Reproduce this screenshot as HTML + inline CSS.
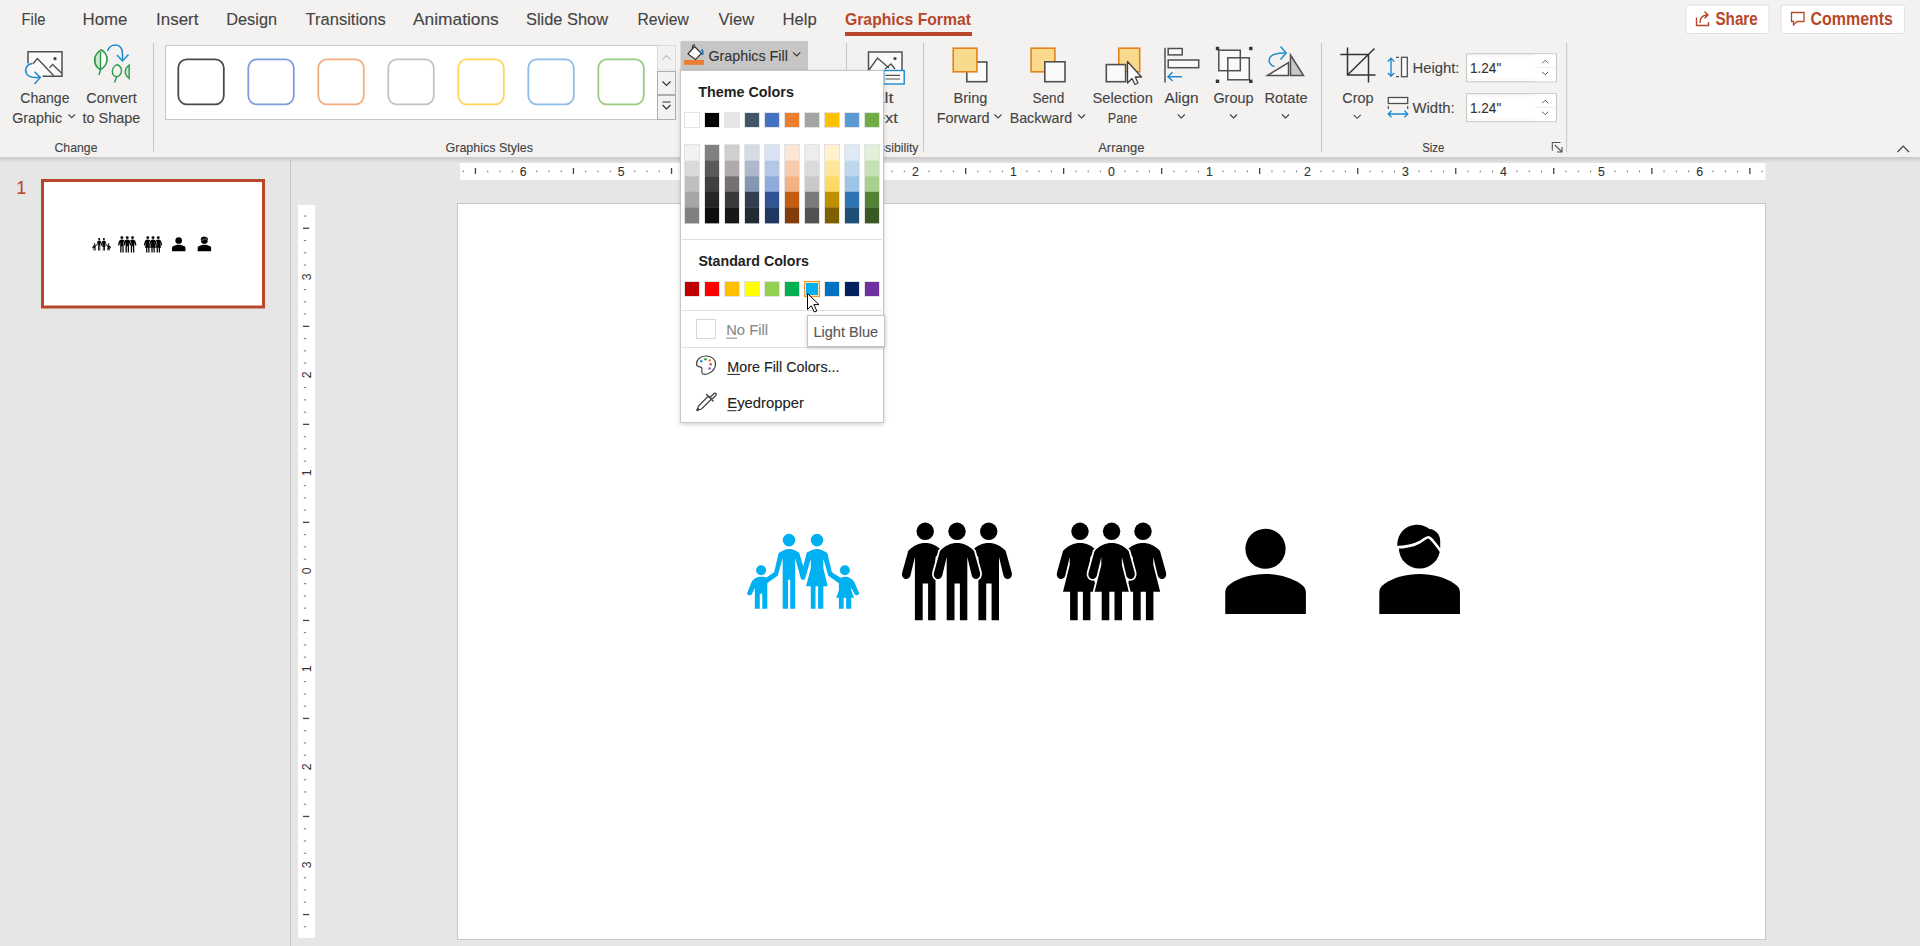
<!DOCTYPE html>
<html><head><meta charset="utf-8"><style>
html,body{margin:0;padding:0;width:1920px;height:946px;overflow:hidden;background:#e6e6e6}
svg{display:block;font-family:"Liberation Sans", sans-serif}
</style></head><body>
<svg width="1920" height="946" viewBox="0 0 1920 946">
<rect x="0" y="0" width="1920" height="157" fill="#f3f2f1"/><rect x="0" y="157" width="1920" height="789" fill="#e6e6e6"/><defs><linearGradient id="shd" x1="0" y1="0" x2="0" y2="1"><stop offset="0" stop-color="#c8c8c8"/><stop offset="1" stop-color="#e6e6e6"/></linearGradient></defs><rect x="0" y="157" width="1920" height="6" fill="url(#shd)"/><text x="21.6" y="25.2" font-size="17" fill="#444" font-weight="400" text-anchor="start" textLength="23.8" lengthAdjust="spacingAndGlyphs" stroke="#444" stroke-width="0.12" >File</text><text x="82.5" y="25.2" font-size="17" fill="#444" font-weight="400" text-anchor="start" textLength="44.9" lengthAdjust="spacingAndGlyphs" stroke="#444" stroke-width="0.12" >Home</text><text x="156.0" y="25.2" font-size="17" fill="#444" font-weight="400" text-anchor="start" textLength="42.5" lengthAdjust="spacingAndGlyphs" stroke="#444" stroke-width="0.12" >Insert</text><text x="226.3" y="25.2" font-size="17" fill="#444" font-weight="400" text-anchor="start" textLength="50.7" lengthAdjust="spacingAndGlyphs" stroke="#444" stroke-width="0.12" >Design</text><text x="305.5" y="25.2" font-size="17" fill="#444" font-weight="400" text-anchor="start" textLength="80.3" lengthAdjust="spacingAndGlyphs" stroke="#444" stroke-width="0.12" >Transitions</text><text x="413.0" y="25.2" font-size="17" fill="#444" font-weight="400" text-anchor="start" textLength="85.8" lengthAdjust="spacingAndGlyphs" stroke="#444" stroke-width="0.12" >Animations</text><text x="526.0" y="25.2" font-size="17" fill="#444" font-weight="400" text-anchor="start" textLength="82.0" lengthAdjust="spacingAndGlyphs" stroke="#444" stroke-width="0.12" >Slide Show</text><text x="637.4" y="25.2" font-size="17" fill="#444" font-weight="400" text-anchor="start" textLength="51.5" lengthAdjust="spacingAndGlyphs" stroke="#444" stroke-width="0.12" >Review</text><text x="718.6" y="25.2" font-size="17" fill="#444" font-weight="400" text-anchor="start" textLength="35.5" lengthAdjust="spacingAndGlyphs" stroke="#444" stroke-width="0.12" >View</text><text x="782.5" y="25.2" font-size="17" fill="#444" font-weight="400" text-anchor="start" textLength="34.3" lengthAdjust="spacingAndGlyphs" stroke="#444" stroke-width="0.12" >Help</text><text x="845.0" y="25.2" font-size="17" fill="#b7472a" font-weight="700" text-anchor="start" textLength="126.0" lengthAdjust="spacingAndGlyphs" >Graphics Format</text><rect x="845" y="32" width="127" height="4" fill="#b7472a"/><rect x="1686" y="5" width="83" height="28.5" rx="2.5" fill="#fff" stroke="#e1dfdd" stroke-width="1"/><rect x="1781" y="5" width="123.5" height="28.5" rx="2.5" fill="#fff" stroke="#e1dfdd" stroke-width="1"/><path d="M1696.5 17.5 V25.5 H1708.5 V22" fill="none" stroke="#b7472a" stroke-width="1.4"/><path d="M1700 23 C1700 17 1703 15 1707.5 15 M1704.5 11.5 L1708 15 L1704.5 18.5" fill="none" stroke="#b7472a" stroke-width="1.4"/><text x="1715.4" y="25.4" font-size="17.5" fill="#b7472a" font-weight="700" text-anchor="start" textLength="42.4" lengthAdjust="spacingAndGlyphs" >Share</text><path d="M1791.5 12.5 H1804 V21.5 H1797 L1793.5 25 V21.5 H1791.5 Z" fill="none" stroke="#b7472a" stroke-width="1.3"/><text x="1810.6" y="25.4" font-size="17.5" fill="#b7472a" font-weight="700" text-anchor="start" textLength="82.4" lengthAdjust="spacingAndGlyphs" >Comments</text><path d="M1897.5 152 L1903.2 146 L1909 152" fill="none" stroke="#444" stroke-width="1.2"/><line x1="153.5" y1="43" x2="153.5" y2="151.5" stroke="#c8c6c4" stroke-width="1"/><line x1="846.5" y1="43" x2="846.5" y2="151.5" stroke="#c8c6c4" stroke-width="1"/><line x1="923.5" y1="43" x2="923.5" y2="151.5" stroke="#c8c6c4" stroke-width="1"/><line x1="1321.5" y1="43" x2="1321.5" y2="152" stroke="#c8c6c4" stroke-width="1"/><line x1="1566.7" y1="43" x2="1566.7" y2="152" stroke="#c8c6c4" stroke-width="1"/><rect x="28" y="51.8" width="34" height="24.5" fill="#fafafa"/><path d="M28 63.5 V51.8 H62 V76.3 H42.5" fill="none" stroke="#505050" stroke-width="1.5"/><path d="M32.7 64 L37.4 58.6 L54 76 M49.5 67.9 L52.6 64.4 L62 73.6" fill="none" stroke="#505050" stroke-width="1.4"/><circle cx="55" cy="58.7" r="1.6" fill="#404040"/><path d="M32 63.5 C26 64.5 24.5 70 26.5 73.5 C28 76.5 31 77.4 35 77.4 L40 77.4" fill="none" stroke="#1e8bcd" stroke-width="1.5"/><path d="M34.5 71.7 L40.3 77.4 L34.5 84" fill="none" stroke="#1e8bcd" stroke-width="1.5"/><text x="20.3" y="102.5" font-size="15" fill="#444" font-weight="400" text-anchor="start" textLength="49.2" lengthAdjust="spacingAndGlyphs" stroke="#444" stroke-width="0.12" >Change</text><text x="12.2" y="122.5" font-size="15" fill="#444" font-weight="400" text-anchor="start" textLength="50.0" lengthAdjust="spacingAndGlyphs" stroke="#444" stroke-width="0.12" >Graphic</text><path d="M68.5 114.5 L71.7 117.7 L75 114.5" fill="none" stroke="#444" stroke-width="1.1"/><path d="M101 50 C96 53 94 58 94.8 62 C95.5 66 98 68.5 100.5 69.5 C104 67.5 107 64 107 59 C107 55 104 51 101 50 Z" fill="#c9e8cf" stroke="#2a9a46" stroke-width="1.4"/><path d="M101 50 C104 51 107 55 107 59 C107 64 104 67.5 100.5 69.5 Z" fill="#fafafa"/><path d="M101 50 C104 51 107 55 107 59 C107 64 104 67.5 100.5 69.5 C98 68.5 95.5 66 94.8 62 C94 58 96 53 101 50 M100.5 52 L100.5 70 L99 75" fill="none" stroke="#2a9a46" stroke-width="1.4"/><path d="M107.5 51 C109 46.5 112 45 115.5 45 C120 45 122.5 49 122.5 53.5 L122.5 60.5" fill="none" stroke="#1e8bcd" stroke-width="1.5"/><path d="M117 55 L122.5 61 L128.5 54.5" fill="none" stroke="#1e8bcd" stroke-width="1.5"/><path d="M117 64.5 C113.5 66.5 112.3 69.5 112.3 71.5 C112.5 74.5 114.5 76.5 116.5 77 C119.5 76 121.5 73.5 121.5 70.5 C121.5 68 119.5 65.5 117 64.5 Z M116.5 77 L114.5 82.5" fill="none" stroke="#2a9a46" stroke-width="1.4"/><path d="M129.2 65 C126.5 67 125.2 69.5 125.2 71.8 C125.2 74.2 126.5 76.5 129.2 78.5 Z" fill="#c9e8cf" stroke="#2a9a46" stroke-width="1.4"/><text x="86.3" y="102.5" font-size="15" fill="#444" font-weight="400" text-anchor="start" textLength="50.4" lengthAdjust="spacingAndGlyphs" stroke="#444" stroke-width="0.12" >Convert</text><text x="82.5" y="122.5" font-size="15" fill="#444" font-weight="400" text-anchor="start" textLength="57.9" lengthAdjust="spacingAndGlyphs" stroke="#444" stroke-width="0.12" >to Shape</text><text x="54.5" y="151.7" font-size="12.8" fill="#444" font-weight="400" text-anchor="start" textLength="43.0" lengthAdjust="spacingAndGlyphs" stroke="#444" stroke-width="0.12" >Change</text><rect x="165.5" y="45.5" width="510" height="74" fill="#fff" stroke="#c8c6c4" stroke-width="1"/><rect x="178.3" y="59.3" width="45.5" height="45" rx="8.5" fill="#fff" stroke="#4a4a4a" stroke-width="1.8"/><rect x="248.3" y="59.3" width="45.5" height="45" rx="8.5" fill="#fff" stroke="#7d9ddb" stroke-width="1.8"/><rect x="318.3" y="59.3" width="45.5" height="45" rx="8.5" fill="#fff" stroke="#f5ac7f" stroke-width="1.8"/><rect x="388.3" y="59.3" width="45.5" height="45" rx="8.5" fill="#fff" stroke="#c2c2c2" stroke-width="1.8"/><rect x="458.3" y="59.3" width="45.5" height="45" rx="8.5" fill="#fff" stroke="#ffd45a" stroke-width="1.8"/><rect x="528.3" y="59.3" width="45.5" height="45" rx="8.5" fill="#fff" stroke="#8dbce8" stroke-width="1.8"/><rect x="598.3" y="59.3" width="45.5" height="45" rx="8.5" fill="#fff" stroke="#98cc80" stroke-width="1.8"/><rect x="657.5" y="45.5" width="18" height="24.5" fill="#f3f2f1" stroke="#dcdad8" stroke-width="1"/><rect x="657.5" y="71.5" width="18" height="23" fill="#f3f2f1" stroke="#b0aeac" stroke-width="1"/><rect x="657.5" y="95.5" width="18" height="24" fill="#f3f2f1" stroke="#b0aeac" stroke-width="1"/><path d="M662.5 59.5 L666.5 55.5 L670.5 59.5" fill="none" stroke="#c0c0c0" stroke-width="1.1"/><path d="M662.5 81.5 L666.5 85.5 L670.5 81.5" fill="none" stroke="#333" stroke-width="1.2"/><path d="M662.5 102 H670.5 M662.5 105 L666.5 109 L670.5 105" fill="none" stroke="#333" stroke-width="1.2"/><text x="445.5" y="151.7" font-size="12.8" fill="#444" font-weight="400" text-anchor="start" textLength="87.5" lengthAdjust="spacingAndGlyphs" stroke="#444" stroke-width="0.12" >Graphics Styles</text><rect x="680.5" y="41" width="127.5" height="30" fill="#c8c6c4"/><rect x="684" y="60" width="20" height="4.8" fill="#ed7d31"/><path d="M688 54 L694.5 46.5 L701.5 53.5 L695.5 59.5 Z" fill="#fff" stroke="#333" stroke-width="1.2"/><path d="M692.5 48.5 C692 45.5 693.5 44.5 695 45" fill="none" stroke="#333" stroke-width="1.1"/><path d="M701.5 49.5 C703 50.5 703 53 702.5 55" fill="none" stroke="#1e6fc0" stroke-width="1.6"/><text x="708.4" y="61.0" font-size="14.5" fill="#333" font-weight="400" text-anchor="start" textLength="79.5" lengthAdjust="spacingAndGlyphs" stroke="#333" stroke-width="0.12" >Graphics Fill</text><path d="M793 52.3 L796.7 56 L800.3 52.3" fill="none" stroke="#333" stroke-width="1.1"/><rect x="868.5" y="52" width="33.5" height="24" fill="#fafafa" stroke="#505050" stroke-width="1.5"/><path d="M869 70 L877.5 58 L889 68 M885 69 L891 64 L895 69" fill="none" stroke="#505050" stroke-width="1.4"/><circle cx="895" cy="58.5" r="1.6" fill="#404040"/><rect x="883.7" y="70.5" width="20.5" height="13.5" fill="#fafafa" stroke="#1e8bcd" stroke-width="1.4"/><path d="M885.5 75.3 H900 M885.5 79 H900" stroke="#505050" stroke-width="1.2"/><text x="872.5" y="102.5" font-size="15" fill="#444" font-weight="400" text-anchor="start" textLength="21.0" lengthAdjust="spacingAndGlyphs" stroke="#444" stroke-width="0.12" >Alt</text><text x="867.5" y="122.5" font-size="15" fill="#444" font-weight="400" text-anchor="start" textLength="30.5" lengthAdjust="spacingAndGlyphs" stroke="#444" stroke-width="0.12" >Text</text><text x="851.5" y="151.7" font-size="12.8" fill="#444" font-weight="400" text-anchor="start" textLength="67.0" lengthAdjust="spacingAndGlyphs" stroke="#444" stroke-width="0.12" >Accessibility</text><rect x="966.8" y="62.0" width="20.0" height="19.7" fill="#fafafa" stroke="#505050" stroke-width="1.6"/><rect x="953.2" y="48.2" width="23.7" height="23.6" fill="#f9d98c" stroke="#e3821e" stroke-width="1.6"/><text x="953.5" y="102.5" font-size="15" fill="#444" font-weight="400" text-anchor="start" textLength="33.9" lengthAdjust="spacingAndGlyphs" stroke="#444" stroke-width="0.12" >Bring</text><text x="936.7" y="122.5" font-size="15" fill="#444" font-weight="400" text-anchor="start" textLength="52.9" lengthAdjust="spacingAndGlyphs" stroke="#444" stroke-width="0.12" >Forward</text><path d="M994.5 114.5 L998 118 L1001.5 114.5" fill="none" stroke="#444" stroke-width="1.1"/><rect x="1031.1" y="48.2" width="23.8" height="23.6" fill="#f9d98c" stroke="#e3821e" stroke-width="1.6"/><rect x="1044.8" y="61.8" width="20.2" height="19.9" fill="#fafafa" stroke="#505050" stroke-width="1.6"/><text x="1032.5" y="102.5" font-size="15" fill="#444" font-weight="400" text-anchor="start" textLength="31.7" lengthAdjust="spacingAndGlyphs" stroke="#444" stroke-width="0.12" >Send</text><text x="1009.7" y="122.5" font-size="15" fill="#444" font-weight="400" text-anchor="start" textLength="62.5" lengthAdjust="spacingAndGlyphs" stroke="#444" stroke-width="0.12" >Backward</text><path d="M1078 114.5 L1081.5 118 L1085 114.5" fill="none" stroke="#444" stroke-width="1.1"/><rect x="1118.8" y="48.2" width="20.9" height="23.6" fill="#f9d98c" stroke="#e3821e" stroke-width="1.6"/><rect x="1106.3" y="64.6" width="19.3" height="17.1" fill="#fafafa" stroke="#505050" stroke-width="1.6"/><path d="M1127.5 61.5 L1127.5 83 L1132 78.5 L1135 84.5 L1138 83 L1135.3 77 L1141.5 77 Z" fill="#fafafa" stroke="#404040" stroke-width="1.3" stroke-linejoin="round"/><text x="1092.6" y="102.5" font-size="15" fill="#444" font-weight="400" text-anchor="start" textLength="60.2" lengthAdjust="spacingAndGlyphs" stroke="#444" stroke-width="0.12" >Selection</text><text x="1107.7" y="122.5" font-size="15" fill="#444" font-weight="400" text-anchor="start" textLength="29.6" lengthAdjust="spacingAndGlyphs" stroke="#444" stroke-width="0.12" >Pane</text><line x1="1165" y1="47.7" x2="1165" y2="82.5" stroke="#505050" stroke-width="1.5"/><rect x="1168.2" y="48.5" width="14.0" height="6.4" fill="#fafafa" stroke="#505050" stroke-width="1.5"/><rect x="1168.2" y="60.0" width="30.5" height="7.7" fill="#fafafa" stroke="#505050" stroke-width="1.5"/><path d="M1168 76.7 H1182 M1172.5 72.3 L1168 76.7 L1172.5 81" fill="none" stroke="#1e8bcd" stroke-width="1.5"/><text x="1164.4" y="102.5" font-size="15" fill="#444" font-weight="400" text-anchor="start" textLength="34.3" lengthAdjust="spacingAndGlyphs" stroke="#444" stroke-width="0.12" >Align</text><path d="M1177.8 114.5 L1181.3 118 L1184.8 114.5" fill="none" stroke="#444" stroke-width="1.1"/><rect x="1218" y="49.5" width="32" height="30.5" fill="#fafafa"/><rect x="1218.8" y="50.2" width="21.5" height="20.5" fill="none" stroke="#505050" stroke-width="1.5"/><rect x="1227.8" y="57.8" width="21.5" height="22.0" fill="none" stroke="#505050" stroke-width="1.5"/><rect x="1215.8" y="46.8" width="3.4" height="3.4" fill="#333"/><rect x="1249.1" y="46.8" width="3.4" height="3.4" fill="#333"/><rect x="1215.8" y="79.6" width="3.4" height="3.4" fill="#333"/><rect x="1249.1" y="79.6" width="3.4" height="3.4" fill="#333"/><text x="1213.4" y="102.5" font-size="15" fill="#444" font-weight="400" text-anchor="start" textLength="40.1" lengthAdjust="spacingAndGlyphs" stroke="#444" stroke-width="0.12" >Group</text><path d="M1230 114.5 L1233.5 118 L1237 114.5" fill="none" stroke="#444" stroke-width="1.1"/><path d="M1267.5 75.5 L1288.5 62.5 V75.5 Z" fill="#fafafa" stroke="#505050" stroke-width="1.5" stroke-linejoin="miter"/><path d="M1290.5 55 L1303.5 75.5 H1290.5 Z" fill="#c8c8c8" stroke="#505050" stroke-width="1.5"/><path d="M1274.5 66.5 C1269.5 65 1268 61 1270 57.5 C1272 54 1276 53 1285 53" fill="none" stroke="#1e8bcd" stroke-width="1.5"/><path d="M1280.5 46.5 L1286.2 53 L1280.5 59.5" fill="none" stroke="#1e8bcd" stroke-width="1.5"/><text x="1264.5" y="102.5" font-size="15" fill="#444" font-weight="400" text-anchor="start" textLength="43.1" lengthAdjust="spacingAndGlyphs" stroke="#444" stroke-width="0.12" >Rotate</text><path d="M1282 114.5 L1285.5 118 L1289 114.5" fill="none" stroke="#444" stroke-width="1.1"/><text x="1098.2" y="151.7" font-size="12.8" fill="#444" font-weight="400" text-anchor="start" textLength="46.2" lengthAdjust="spacingAndGlyphs" stroke="#444" stroke-width="0.12" >Arrange</text><path d="M1347.5 47.5 V75 H1375.5 M1340.3 54.5 H1368.5 V82.4 M1347.5 75 L1374.5 48.5" fill="none" stroke="#333" stroke-width="1.5"/><text x="1342.3" y="102.5" font-size="15" fill="#444" font-weight="400" text-anchor="start" textLength="31.2" lengthAdjust="spacingAndGlyphs" stroke="#444" stroke-width="0.12" >Crop</text><path d="M1353.7 114.8 L1357.2 118.3 L1360.7 114.8" fill="none" stroke="#444" stroke-width="1.1"/><path d="M1391 58.5 V76 M1387.8 61.5 L1391 58.3 L1394.2 61.5 M1387.8 73 L1391 76.2 L1394.2 73" fill="none" stroke="#1e8bcd" stroke-width="1.4"/><rect x="1401.5" y="57.3" width="5.8" height="19.4" fill="#fafafa" stroke="#505050" stroke-width="1.3"/><path d="M1396 57.3 H1399 M1396 76.7 H1399" stroke="#505050" stroke-width="1.2"/><text x="1412.5" y="73.0" font-size="15" fill="#444" font-weight="400" text-anchor="start" textLength="47.0" lengthAdjust="spacingAndGlyphs" stroke="#444" stroke-width="0.12" >Height:</text><rect x="1388.3" y="97.5" width="19.4" height="6" fill="#fafafa" stroke="#505050" stroke-width="1.3"/><path d="M1388.3 106 V109 M1407.7 106 V109" stroke="#505050" stroke-width="1.2"/><path d="M1388.5 114 H1407.5 M1391.5 110.8 L1388.3 114 L1391.5 117.2 M1404.5 110.8 L1407.7 114 L1404.5 117.2" fill="none" stroke="#1e8bcd" stroke-width="1.4"/><text x="1412.5" y="112.5" font-size="15" fill="#444" font-weight="400" text-anchor="start" textLength="42.2" lengthAdjust="spacingAndGlyphs" stroke="#444" stroke-width="0.12" >Width:</text><rect x="1466.5" y="53.8" width="90" height="28" fill="#fafafa" stroke="#c8c6c4" stroke-width="1"/><rect x="1467.6" y="57.0" width="66.5" height="20.3" fill="#fff"/><rect x="1534.5" y="54.3" width="21.5" height="27" fill="#fff"/><line x1="1535" y1="67.5" x2="1556" y2="67.5" stroke="#f0efee" stroke-width="1"/><path d="M1542.2 63.3 L1545.2 60.3 L1548.2 63.3" fill="none" stroke="#555" stroke-width="1"/><path d="M1542.2 71.8 L1545.2 74.8 L1548.2 71.8" fill="none" stroke="#555" stroke-width="1"/><text x="1470.0" y="73.0" font-size="14.5" fill="#333" font-weight="400" text-anchor="start" textLength="31.2" lengthAdjust="spacingAndGlyphs" stroke="#333" stroke-width="0.12" >1.24&quot;</text><rect x="1466.5" y="93.7" width="90" height="28" fill="#fafafa" stroke="#c8c6c4" stroke-width="1"/><rect x="1467.6" y="96.9" width="66.5" height="20.3" fill="#fff"/><rect x="1534.5" y="94.2" width="21.5" height="27" fill="#fff"/><line x1="1535" y1="107.4" x2="1556" y2="107.4" stroke="#f0efee" stroke-width="1"/><path d="M1542.2 103.2 L1545.2 100.2 L1548.2 103.2" fill="none" stroke="#555" stroke-width="1"/><path d="M1542.2 111.7 L1545.2 114.7 L1548.2 111.7" fill="none" stroke="#555" stroke-width="1"/><text x="1470.0" y="112.5" font-size="14.5" fill="#333" font-weight="400" text-anchor="start" textLength="31.2" lengthAdjust="spacingAndGlyphs" stroke="#333" stroke-width="0.12" >1.24&quot;</text><text x="1422.2" y="151.5" font-size="12.8" fill="#444" font-weight="400" text-anchor="start" textLength="22.1" lengthAdjust="spacingAndGlyphs" stroke="#444" stroke-width="0.12" >Size</text><path d="M1552.3 150.8 V142.5 H1560.5 M1554.8 145 L1562 152 M1562 147 V152 H1557" fill="none" stroke="#555" stroke-width="1.1"/><line x1="290.5" y1="160" x2="290.5" y2="946" stroke="#c8c6c4" stroke-width="1"/><text x="16.5" y="194.0" font-size="17.5" fill="#b7472a" font-weight="400" text-anchor="start" stroke="#b7472a" stroke-width="0.12" >1</text><rect x="42.5" y="180.5" width="221" height="126.5" fill="#fff" stroke="#b7472a" stroke-width="3"/><rect x="460" y="163" width="1305.5" height="17" fill="#fff"/><rect x="298" y="205" width="17" height="733" fill="#fff"/><rect x="462.7" y="170.5" width="1.1" height="1.8" fill="#808080"/><rect x="474.8" y="168" width="1.3" height="6" fill="#444"/><rect x="487.2" y="170.5" width="1.1" height="1.8" fill="#808080"/><rect x="499.4" y="170.5" width="1.1" height="1.8" fill="#808080"/><rect x="511.7" y="170.5" width="1.1" height="1.8" fill="#808080"/><text x="523.2" y="175.8" font-size="12.3" fill="#333" font-weight="400" text-anchor="middle" stroke="#333" stroke-width="0.12" >6</text><rect x="536.2" y="170.5" width="1.1" height="1.8" fill="#808080"/><rect x="548.4" y="170.5" width="1.1" height="1.8" fill="#808080"/><rect x="560.7" y="170.5" width="1.1" height="1.8" fill="#808080"/><rect x="572.8" y="168" width="1.3" height="6" fill="#444"/><rect x="585.2" y="170.5" width="1.1" height="1.8" fill="#808080"/><rect x="597.4" y="170.5" width="1.1" height="1.8" fill="#808080"/><rect x="609.7" y="170.5" width="1.1" height="1.8" fill="#808080"/><text x="621.2" y="175.8" font-size="12.3" fill="#333" font-weight="400" text-anchor="middle" stroke="#333" stroke-width="0.12" >5</text><rect x="634.2" y="170.5" width="1.1" height="1.8" fill="#808080"/><rect x="646.5" y="170.5" width="1.1" height="1.8" fill="#808080"/><rect x="658.7" y="170.5" width="1.1" height="1.8" fill="#808080"/><rect x="670.9" y="168" width="1.3" height="6" fill="#444"/><rect x="683.2" y="170.5" width="1.1" height="1.8" fill="#808080"/><rect x="695.5" y="170.5" width="1.1" height="1.8" fill="#808080"/><rect x="707.7" y="170.5" width="1.1" height="1.8" fill="#808080"/><text x="719.3" y="175.8" font-size="12.3" fill="#333" font-weight="400" text-anchor="middle" stroke="#333" stroke-width="0.12" >4</text><rect x="732.2" y="170.5" width="1.1" height="1.8" fill="#808080"/><rect x="744.5" y="170.5" width="1.1" height="1.8" fill="#808080"/><rect x="756.7" y="170.5" width="1.1" height="1.8" fill="#808080"/><rect x="768.9" y="168" width="1.3" height="6" fill="#444"/><rect x="781.2" y="170.5" width="1.1" height="1.8" fill="#808080"/><rect x="793.5" y="170.5" width="1.1" height="1.8" fill="#808080"/><rect x="805.8" y="170.5" width="1.1" height="1.8" fill="#808080"/><text x="817.3" y="175.8" font-size="12.3" fill="#333" font-weight="400" text-anchor="middle" stroke="#333" stroke-width="0.12" >3</text><rect x="830.3" y="170.5" width="1.1" height="1.8" fill="#808080"/><rect x="842.5" y="170.5" width="1.1" height="1.8" fill="#808080"/><rect x="854.8" y="170.5" width="1.1" height="1.8" fill="#808080"/><rect x="866.9" y="168" width="1.3" height="6" fill="#444"/><rect x="879.3" y="170.5" width="1.1" height="1.8" fill="#808080"/><rect x="891.5" y="170.5" width="1.1" height="1.8" fill="#808080"/><rect x="903.8" y="170.5" width="1.1" height="1.8" fill="#808080"/><text x="915.3" y="175.8" font-size="12.3" fill="#333" font-weight="400" text-anchor="middle" stroke="#333" stroke-width="0.12" >2</text><rect x="928.3" y="170.5" width="1.1" height="1.8" fill="#808080"/><rect x="940.5" y="170.5" width="1.1" height="1.8" fill="#808080"/><rect x="952.8" y="170.5" width="1.1" height="1.8" fill="#808080"/><rect x="965.0" y="168" width="1.3" height="6" fill="#444"/><rect x="977.3" y="170.5" width="1.1" height="1.8" fill="#808080"/><rect x="989.6" y="170.5" width="1.1" height="1.8" fill="#808080"/><rect x="1001.8" y="170.5" width="1.1" height="1.8" fill="#808080"/><text x="1013.4" y="175.8" font-size="12.3" fill="#333" font-weight="400" text-anchor="middle" stroke="#333" stroke-width="0.12" >1</text><rect x="1026.3" y="170.5" width="1.1" height="1.8" fill="#808080"/><rect x="1038.6" y="170.5" width="1.1" height="1.8" fill="#808080"/><rect x="1050.8" y="170.5" width="1.1" height="1.8" fill="#808080"/><rect x="1063.0" y="168" width="1.3" height="6" fill="#444"/><rect x="1075.3" y="170.5" width="1.1" height="1.8" fill="#808080"/><rect x="1087.6" y="170.5" width="1.1" height="1.8" fill="#808080"/><rect x="1099.8" y="170.5" width="1.1" height="1.8" fill="#808080"/><text x="1111.4" y="175.8" font-size="12.3" fill="#333" font-weight="400" text-anchor="middle" stroke="#333" stroke-width="0.12" >0</text><rect x="1124.4" y="170.5" width="1.1" height="1.8" fill="#808080"/><rect x="1136.6" y="170.5" width="1.1" height="1.8" fill="#808080"/><rect x="1148.9" y="170.5" width="1.1" height="1.8" fill="#808080"/><rect x="1161.0" y="168" width="1.3" height="6" fill="#444"/><rect x="1173.4" y="170.5" width="1.1" height="1.8" fill="#808080"/><rect x="1185.6" y="170.5" width="1.1" height="1.8" fill="#808080"/><rect x="1197.9" y="170.5" width="1.1" height="1.8" fill="#808080"/><text x="1209.4" y="175.8" font-size="12.3" fill="#333" font-weight="400" text-anchor="middle" stroke="#333" stroke-width="0.12" >1</text><rect x="1222.4" y="170.5" width="1.1" height="1.8" fill="#808080"/><rect x="1234.6" y="170.5" width="1.1" height="1.8" fill="#808080"/><rect x="1246.9" y="170.5" width="1.1" height="1.8" fill="#808080"/><rect x="1259.0" y="168" width="1.3" height="6" fill="#444"/><rect x="1271.4" y="170.5" width="1.1" height="1.8" fill="#808080"/><rect x="1283.7" y="170.5" width="1.1" height="1.8" fill="#808080"/><rect x="1295.9" y="170.5" width="1.1" height="1.8" fill="#808080"/><text x="1307.5" y="175.8" font-size="12.3" fill="#333" font-weight="400" text-anchor="middle" stroke="#333" stroke-width="0.12" >2</text><rect x="1320.4" y="170.5" width="1.1" height="1.8" fill="#808080"/><rect x="1332.7" y="170.5" width="1.1" height="1.8" fill="#808080"/><rect x="1344.9" y="170.5" width="1.1" height="1.8" fill="#808080"/><rect x="1357.1" y="168" width="1.3" height="6" fill="#444"/><rect x="1369.4" y="170.5" width="1.1" height="1.8" fill="#808080"/><rect x="1381.7" y="170.5" width="1.1" height="1.8" fill="#808080"/><rect x="1393.9" y="170.5" width="1.1" height="1.8" fill="#808080"/><text x="1405.5" y="175.8" font-size="12.3" fill="#333" font-weight="400" text-anchor="middle" stroke="#333" stroke-width="0.12" >3</text><rect x="1418.4" y="170.5" width="1.1" height="1.8" fill="#808080"/><rect x="1430.7" y="170.5" width="1.1" height="1.8" fill="#808080"/><rect x="1443.0" y="170.5" width="1.1" height="1.8" fill="#808080"/><rect x="1455.1" y="168" width="1.3" height="6" fill="#444"/><rect x="1467.5" y="170.5" width="1.1" height="1.8" fill="#808080"/><rect x="1479.7" y="170.5" width="1.1" height="1.8" fill="#808080"/><rect x="1492.0" y="170.5" width="1.1" height="1.8" fill="#808080"/><text x="1503.5" y="175.8" font-size="12.3" fill="#333" font-weight="400" text-anchor="middle" stroke="#333" stroke-width="0.12" >4</text><rect x="1516.5" y="170.5" width="1.1" height="1.8" fill="#808080"/><rect x="1528.7" y="170.5" width="1.1" height="1.8" fill="#808080"/><rect x="1541.0" y="170.5" width="1.1" height="1.8" fill="#808080"/><rect x="1553.1" y="168" width="1.3" height="6" fill="#444"/><rect x="1565.5" y="170.5" width="1.1" height="1.8" fill="#808080"/><rect x="1577.7" y="170.5" width="1.1" height="1.8" fill="#808080"/><rect x="1590.0" y="170.5" width="1.1" height="1.8" fill="#808080"/><text x="1601.5" y="175.8" font-size="12.3" fill="#333" font-weight="400" text-anchor="middle" stroke="#333" stroke-width="0.12" >5</text><rect x="1614.5" y="170.5" width="1.1" height="1.8" fill="#808080"/><rect x="1626.8" y="170.5" width="1.1" height="1.8" fill="#808080"/><rect x="1639.0" y="170.5" width="1.1" height="1.8" fill="#808080"/><rect x="1651.2" y="168" width="1.3" height="6" fill="#444"/><rect x="1663.5" y="170.5" width="1.1" height="1.8" fill="#808080"/><rect x="1675.8" y="170.5" width="1.1" height="1.8" fill="#808080"/><rect x="1688.0" y="170.5" width="1.1" height="1.8" fill="#808080"/><text x="1699.6" y="175.8" font-size="12.3" fill="#333" font-weight="400" text-anchor="middle" stroke="#333" stroke-width="0.12" >6</text><rect x="1712.5" y="170.5" width="1.1" height="1.8" fill="#808080"/><rect x="1724.8" y="170.5" width="1.1" height="1.8" fill="#808080"/><rect x="1737.0" y="170.5" width="1.1" height="1.8" fill="#808080"/><rect x="1749.2" y="168" width="1.3" height="6" fill="#444"/><rect x="1761.5" y="170.5" width="1.1" height="1.8" fill="#808080"/><rect x="303.8" y="215.5" width="2.4" height="1.1" fill="#808080"/><rect x="303" y="227.6" width="6.2" height="1.3" fill="#444"/><rect x="303.8" y="240.0" width="2.4" height="1.1" fill="#808080"/><rect x="303.8" y="252.3" width="2.4" height="1.1" fill="#808080"/><rect x="303.8" y="264.5" width="2.4" height="1.1" fill="#808080"/><text transform="translate(310.8 276.8) rotate(-90)" x="0" y="0" font-size="12.3" fill="#333" text-anchor="middle">3</text><rect x="303.8" y="289.0" width="2.4" height="1.1" fill="#808080"/><rect x="303.8" y="301.3" width="2.4" height="1.1" fill="#808080"/><rect x="303.8" y="313.5" width="2.4" height="1.1" fill="#808080"/><rect x="303" y="325.7" width="6.2" height="1.3" fill="#444"/><rect x="303.8" y="338.0" width="2.4" height="1.1" fill="#808080"/><rect x="303.8" y="350.3" width="2.4" height="1.1" fill="#808080"/><rect x="303.8" y="362.5" width="2.4" height="1.1" fill="#808080"/><text transform="translate(310.8 374.8) rotate(-90)" x="0" y="0" font-size="12.3" fill="#333" text-anchor="middle">2</text><rect x="303.8" y="387.0" width="2.4" height="1.1" fill="#808080"/><rect x="303.8" y="399.3" width="2.4" height="1.1" fill="#808080"/><rect x="303.8" y="411.6" width="2.4" height="1.1" fill="#808080"/><rect x="303" y="423.7" width="6.2" height="1.3" fill="#444"/><rect x="303.8" y="436.1" width="2.4" height="1.1" fill="#808080"/><rect x="303.8" y="448.3" width="2.4" height="1.1" fill="#808080"/><rect x="303.8" y="460.6" width="2.4" height="1.1" fill="#808080"/><text transform="translate(310.8 472.8) rotate(-90)" x="0" y="0" font-size="12.3" fill="#333" text-anchor="middle">1</text><rect x="303.8" y="485.1" width="2.4" height="1.1" fill="#808080"/><rect x="303.8" y="497.3" width="2.4" height="1.1" fill="#808080"/><rect x="303.8" y="509.6" width="2.4" height="1.1" fill="#808080"/><rect x="303" y="521.7" width="6.2" height="1.3" fill="#444"/><rect x="303.8" y="534.1" width="2.4" height="1.1" fill="#808080"/><rect x="303.8" y="546.3" width="2.4" height="1.1" fill="#808080"/><rect x="303.8" y="558.6" width="2.4" height="1.1" fill="#808080"/><text transform="translate(310.8 570.9) rotate(-90)" x="0" y="0" font-size="12.3" fill="#333" text-anchor="middle">0</text><rect x="303.8" y="583.1" width="2.4" height="1.1" fill="#808080"/><rect x="303.8" y="595.4" width="2.4" height="1.1" fill="#808080"/><rect x="303.8" y="607.6" width="2.4" height="1.1" fill="#808080"/><rect x="303" y="619.8" width="6.2" height="1.3" fill="#444"/><rect x="303.8" y="632.1" width="2.4" height="1.1" fill="#808080"/><rect x="303.8" y="644.4" width="2.4" height="1.1" fill="#808080"/><rect x="303.8" y="656.6" width="2.4" height="1.1" fill="#808080"/><text transform="translate(310.8 668.9) rotate(-90)" x="0" y="0" font-size="12.3" fill="#333" text-anchor="middle">1</text><rect x="303.8" y="681.1" width="2.4" height="1.1" fill="#808080"/><rect x="303.8" y="693.4" width="2.4" height="1.1" fill="#808080"/><rect x="303.8" y="705.6" width="2.4" height="1.1" fill="#808080"/><rect x="303" y="717.8" width="6.2" height="1.3" fill="#444"/><rect x="303.8" y="730.1" width="2.4" height="1.1" fill="#808080"/><rect x="303.8" y="742.4" width="2.4" height="1.1" fill="#808080"/><rect x="303.8" y="754.7" width="2.4" height="1.1" fill="#808080"/><text transform="translate(310.8 766.9) rotate(-90)" x="0" y="0" font-size="12.3" fill="#333" text-anchor="middle">2</text><rect x="303.8" y="779.2" width="2.4" height="1.1" fill="#808080"/><rect x="303.8" y="791.4" width="2.4" height="1.1" fill="#808080"/><rect x="303.8" y="803.7" width="2.4" height="1.1" fill="#808080"/><rect x="303" y="815.8" width="6.2" height="1.3" fill="#444"/><rect x="303.8" y="828.2" width="2.4" height="1.1" fill="#808080"/><rect x="303.8" y="840.4" width="2.4" height="1.1" fill="#808080"/><rect x="303.8" y="852.7" width="2.4" height="1.1" fill="#808080"/><text transform="translate(310.8 864.9) rotate(-90)" x="0" y="0" font-size="12.3" fill="#333" text-anchor="middle">3</text><rect x="303.8" y="877.2" width="2.4" height="1.1" fill="#808080"/><rect x="303.8" y="889.4" width="2.4" height="1.1" fill="#808080"/><rect x="303.8" y="901.7" width="2.4" height="1.1" fill="#808080"/><rect x="303" y="913.9" width="6.2" height="1.3" fill="#444"/><rect x="303.8" y="926.2" width="2.4" height="1.1" fill="#808080"/><rect x="457.5" y="203.5" width="1308" height="736" fill="#fff" stroke="#c6c6c6" stroke-width="1"/><g fill="#00b0f0"><g><circle cx="761.1" cy="570.2" r="5"/><circle cx="789" cy="540.1" r="6.3"/><circle cx="817" cy="540.1" r="6.3"/><circle cx="844.9" cy="570.2" r="5"/><path transform="translate(740 525) scale(0.1004)" d="M115,570 C130,535 170,515 210,515 C235,515 250,518 262,522 L340,470 L385,280 C420,255 455,238 488,238 C520,238 560,252 590,280 L630,410 L665,275 C700,252 735,238 767,238 C800,238 840,255 870,280 L915,470 L1000,525 C1015,518 1030,515 1045,515 C1090,515 1125,540 1140,570 L1185,675 C1190,690 1175,703 1160,700 C1150,698 1143,692 1140,685 L1108,625 L1108,650 L1135,725 L1108,725 L1108,835 L1057,835 L1057,725 L1032,725 L1032,835 L985,835 L985,725 L958,725 L985,650 L985,580 L880,505 L830,335 L830,430 L873,610 L830,610 L830,835 L778,835 L778,610 L752,610 L752,835 L705,835 L705,610 L658,610 L705,430 L705,335 L650,530 C645,550 610,550 605,530 L550,330 L550,835 L500,835 L500,545 L478,545 L478,835 L425,835 L425,330 L375,505 L272,578 L272,835 L222,835 L222,685 L197,685 L197,835 L148,835 L148,625 L118,690 C110,705 85,705 75,692 C70,686 70,680 72,675 Z"/></g></g><g fill="#000"><circle cx="925.2" cy="531.3" r="8.7"/><path d="M908.2,551 C913.2,545.5 919.2,543 925.2,543 C931.2,543 937.2,545.5 942.2,551 L935.5,557 L935.5,620.2 L928.1,620.2 L928.1,583.6 L922.7,583.6 L922.7,620.2 L914.9000000000001,620.2 L914.9000000000001,557 L910.4000000000001,575.8 C909.9000000000001,577.8 908.2,579 906.2,579 C903.7,579 901.2,576.5 902.2,572.5 Z"/><circle cx="988.7" cy="531.3" r="8.7"/><path d="M971.7,551 C976.7,545.5 982.7,543 988.7,543 C994.7,543 1000.7,545.5 1005.7,551 L1011.7,572.5 C1012.7,576.5 1010.2,579 1007.7,579 C1005.7,579 1004.0,577.8 1003.5,575.8 L999.0,557 L999.0,620.2 L991.6,620.2 L991.6,583.6 L986.2,583.6 L986.2,620.2 L978.4000000000001,620.2 L978.4000000000001,557 Z"/><circle cx="957" cy="531.3" r="8.7"/><path d="M940,551 C945,545.5 951,543 957,543 C963,543 969,545.5 974,551 L980,572.5 C981,576.5 978.5,579 976,579 C974,579 972.3,577.8 971.8,575.8 L967.3,557 L967.3,620.2 L959.9,620.2 L959.9,583.6 L954.5,583.6 L954.5,620.2 L946.7,620.2 L946.7,557 L942.2,575.8 C941.7,577.8 940,579 938,579 C935.5,579 933,576.5 934,572.5 Z" stroke="#fff" stroke-width="3.6" paint-order="stroke" stroke-linejoin="round"/></g><g fill="#000"><circle cx="1080" cy="531.3" r="8.7"/><path d="M1063,551 C1068,545.5 1074,543 1080,543 C1086,543 1092,545.5 1097,551 L1090.3,557 L1090.3,565 L1097.2,591.7 L1090.4,591.7 L1090.4,620.2 L1082.9,620.2 L1082.9,591.7 L1077.7,591.7 L1077.7,620.2 L1070.1,620.2 L1070.1,591.7 L1063,591.7 L1069.7,565 L1069.7,557 L1065.2,575.8 C1064.7,577.8 1063,579 1061,579 C1058.5,579 1056,576.5 1057,572.5 Z"/><circle cx="1143" cy="531.3" r="8.7"/><path d="M1126,551 C1131,545.5 1137,543 1143,543 C1149,543 1155,545.5 1160,551 L1166,572.5 C1167,576.5 1164.5,579 1162,579 C1160,579 1158.3,577.8 1157.8,575.8 L1153.3,557 L1153.3,565 L1160.2,591.7 L1153.4,591.7 L1153.4,620.2 L1145.9,620.2 L1145.9,591.7 L1140.7,591.7 L1140.7,620.2 L1133.1,620.2 L1133.1,591.7 L1126,591.7 L1132.7,565 L1132.7,557 Z"/><circle cx="1111.6" cy="531.3" r="8.7"/><path d="M1094.6,551 C1099.6,545.5 1105.6,543 1111.6,543 C1117.6,543 1123.6,545.5 1128.6,551 L1134.6,572.5 C1135.6,576.5 1133.1,579 1130.6,579 C1128.6,579 1126.8999999999999,577.8 1126.3999999999999,575.8 L1121.8999999999999,557 L1121.8999999999999,565 L1128.8,591.7 L1122.0,591.7 L1122.0,620.2 L1114.5,620.2 L1114.5,591.7 L1109.3,591.7 L1109.3,620.2 L1101.6999999999998,620.2 L1101.6999999999998,591.7 L1094.6,591.7 L1101.3,565 L1101.3,557 L1096.8,575.8 C1096.3,577.8 1094.6,579 1092.6,579 C1090.1,579 1087.6,576.5 1088.6,572.5 Z" stroke="#fff" stroke-width="3.6" paint-order="stroke" stroke-linejoin="round"/></g><g fill="#000"><circle cx="1265.5" cy="548.75" r="20.1"/><path d="M1225.25,613.9 V593 C1225.25,588 1227.5,586 1231,583.5 C1240,577.5 1252,574.1 1265.5,574.1 C1279,574.1 1291,577.5 1300,583.5 C1303.5,586 1305.9,588 1305.9,593 V613.9 Z"/><circle cx="1419.5" cy="548" r="20.6"/><path d="M1379.3,613.9 V593 C1379.3,588 1381.55,586 1385.05,583.5 C1394.05,577.5 1406.05,574.1 1419.55,574.1 C1433.05,574.1 1445.05,577.5 1454.05,583.5 C1457.55,586 1459.95,588 1459.95,593 V613.9 Z"/><path d="M1397.3,546.5 C1397,533 1406,524.8 1417.5,524.8 C1422,524.8 1426,526.5 1429.5,529 C1435,529.5 1440.2,534 1440.2,541 L1440.2,548 Z"/><path d="M1395.5,547.3 C1405,547.3 1413,546 1420,542 C1424,539.5 1426.5,537.2 1428.3,537.2 C1430.5,537.2 1433,540.5 1441.5,552" fill="none" stroke="#fff" stroke-width="2.6"/></g><g transform="translate(44 183) scale(0.1668) translate(-458 -204)"><g fill="#000"><g><circle cx="761.1" cy="570.2" r="5"/><circle cx="789" cy="540.1" r="6.3"/><circle cx="817" cy="540.1" r="6.3"/><circle cx="844.9" cy="570.2" r="5"/><path transform="translate(740 525) scale(0.1004)" d="M115,570 C130,535 170,515 210,515 C235,515 250,518 262,522 L340,470 L385,280 C420,255 455,238 488,238 C520,238 560,252 590,280 L630,410 L665,275 C700,252 735,238 767,238 C800,238 840,255 870,280 L915,470 L1000,525 C1015,518 1030,515 1045,515 C1090,515 1125,540 1140,570 L1185,675 C1190,690 1175,703 1160,700 C1150,698 1143,692 1140,685 L1108,625 L1108,650 L1135,725 L1108,725 L1108,835 L1057,835 L1057,725 L1032,725 L1032,835 L985,835 L985,725 L958,725 L985,650 L985,580 L880,505 L830,335 L830,430 L873,610 L830,610 L830,835 L778,835 L778,610 L752,610 L752,835 L705,835 L705,610 L658,610 L705,430 L705,335 L650,530 C645,550 610,550 605,530 L550,330 L550,835 L500,835 L500,545 L478,545 L478,835 L425,835 L425,330 L375,505 L272,578 L272,835 L222,835 L222,685 L197,685 L197,835 L148,835 L148,625 L118,690 C110,705 85,705 75,692 C70,686 70,680 72,675 Z"/></g></g><g fill="#000"><circle cx="925.2" cy="531.3" r="8.7"/><path d="M908.2,551 C913.2,545.5 919.2,543 925.2,543 C931.2,543 937.2,545.5 942.2,551 L935.5,557 L935.5,620.2 L928.1,620.2 L928.1,583.6 L922.7,583.6 L922.7,620.2 L914.9000000000001,620.2 L914.9000000000001,557 L910.4000000000001,575.8 C909.9000000000001,577.8 908.2,579 906.2,579 C903.7,579 901.2,576.5 902.2,572.5 Z"/><circle cx="988.7" cy="531.3" r="8.7"/><path d="M971.7,551 C976.7,545.5 982.7,543 988.7,543 C994.7,543 1000.7,545.5 1005.7,551 L1011.7,572.5 C1012.7,576.5 1010.2,579 1007.7,579 C1005.7,579 1004.0,577.8 1003.5,575.8 L999.0,557 L999.0,620.2 L991.6,620.2 L991.6,583.6 L986.2,583.6 L986.2,620.2 L978.4000000000001,620.2 L978.4000000000001,557 Z"/><circle cx="957" cy="531.3" r="8.7"/><path d="M940,551 C945,545.5 951,543 957,543 C963,543 969,545.5 974,551 L980,572.5 C981,576.5 978.5,579 976,579 C974,579 972.3,577.8 971.8,575.8 L967.3,557 L967.3,620.2 L959.9,620.2 L959.9,583.6 L954.5,583.6 L954.5,620.2 L946.7,620.2 L946.7,557 L942.2,575.8 C941.7,577.8 940,579 938,579 C935.5,579 933,576.5 934,572.5 Z" stroke="#fff" stroke-width="3.6" paint-order="stroke" stroke-linejoin="round"/></g><g fill="#000"><circle cx="1080" cy="531.3" r="8.7"/><path d="M1063,551 C1068,545.5 1074,543 1080,543 C1086,543 1092,545.5 1097,551 L1090.3,557 L1090.3,565 L1097.2,591.7 L1090.4,591.7 L1090.4,620.2 L1082.9,620.2 L1082.9,591.7 L1077.7,591.7 L1077.7,620.2 L1070.1,620.2 L1070.1,591.7 L1063,591.7 L1069.7,565 L1069.7,557 L1065.2,575.8 C1064.7,577.8 1063,579 1061,579 C1058.5,579 1056,576.5 1057,572.5 Z"/><circle cx="1143" cy="531.3" r="8.7"/><path d="M1126,551 C1131,545.5 1137,543 1143,543 C1149,543 1155,545.5 1160,551 L1166,572.5 C1167,576.5 1164.5,579 1162,579 C1160,579 1158.3,577.8 1157.8,575.8 L1153.3,557 L1153.3,565 L1160.2,591.7 L1153.4,591.7 L1153.4,620.2 L1145.9,620.2 L1145.9,591.7 L1140.7,591.7 L1140.7,620.2 L1133.1,620.2 L1133.1,591.7 L1126,591.7 L1132.7,565 L1132.7,557 Z"/><circle cx="1111.6" cy="531.3" r="8.7"/><path d="M1094.6,551 C1099.6,545.5 1105.6,543 1111.6,543 C1117.6,543 1123.6,545.5 1128.6,551 L1134.6,572.5 C1135.6,576.5 1133.1,579 1130.6,579 C1128.6,579 1126.8999999999999,577.8 1126.3999999999999,575.8 L1121.8999999999999,557 L1121.8999999999999,565 L1128.8,591.7 L1122.0,591.7 L1122.0,620.2 L1114.5,620.2 L1114.5,591.7 L1109.3,591.7 L1109.3,620.2 L1101.6999999999998,620.2 L1101.6999999999998,591.7 L1094.6,591.7 L1101.3,565 L1101.3,557 L1096.8,575.8 C1096.3,577.8 1094.6,579 1092.6,579 C1090.1,579 1087.6,576.5 1088.6,572.5 Z" stroke="#fff" stroke-width="3.6" paint-order="stroke" stroke-linejoin="round"/></g><g fill="#000"><circle cx="1265.5" cy="548.75" r="20.1"/><path d="M1225.25,613.9 V593 C1225.25,588 1227.5,586 1231,583.5 C1240,577.5 1252,574.1 1265.5,574.1 C1279,574.1 1291,577.5 1300,583.5 C1303.5,586 1305.9,588 1305.9,593 V613.9 Z"/><circle cx="1419.5" cy="548" r="20.6"/><path d="M1379.3,613.9 V593 C1379.3,588 1381.55,586 1385.05,583.5 C1394.05,577.5 1406.05,574.1 1419.55,574.1 C1433.05,574.1 1445.05,577.5 1454.05,583.5 C1457.55,586 1459.95,588 1459.95,593 V613.9 Z"/><path d="M1397.3,546.5 C1397,533 1406,524.8 1417.5,524.8 C1422,524.8 1426,526.5 1429.5,529 C1435,529.5 1440.2,534 1440.2,541 L1440.2,548 Z"/><path d="M1395.5,547.3 C1405,547.3 1413,546 1420,542 C1424,539.5 1426.5,537.2 1428.3,537.2 C1430.5,537.2 1433,540.5 1441.5,552" fill="none" stroke="#fff" stroke-width="2.6"/></g></g><defs><filter id="msh" x="-10%" y="-10%" width="120%" height="120%"><feDropShadow dx="0" dy="1.5" stdDeviation="2" flood-color="#000" flood-opacity="0.18"/></filter></defs><rect x="680.5" y="70.5" width="203" height="352" fill="#fff" stroke="#c8c6c4" stroke-width="1" filter="url(#msh)"/><text x="698.2" y="97.0" font-size="15" fill="#222" font-weight="700" text-anchor="start" textLength="95.7" lengthAdjust="spacingAndGlyphs" >Theme Colors</text><rect x="684.5" y="112.5" width="15" height="15" fill="#FFFFFF" stroke="#e3e3e3" stroke-width="1"/><rect x="704.5" y="112.5" width="15" height="15" fill="#000000" stroke="#e3e3e3" stroke-width="1"/><rect x="724.5" y="112.5" width="15" height="15" fill="#E7E6E6" stroke="#e3e3e3" stroke-width="1"/><rect x="744.5" y="112.5" width="15" height="15" fill="#44546A" stroke="#e3e3e3" stroke-width="1"/><rect x="764.5" y="112.5" width="15" height="15" fill="#4472C4" stroke="#e3e3e3" stroke-width="1"/><rect x="784.5" y="112.5" width="15" height="15" fill="#ED7D31" stroke="#e3e3e3" stroke-width="1"/><rect x="804.5" y="112.5" width="15" height="15" fill="#A5A5A5" stroke="#e3e3e3" stroke-width="1"/><rect x="824.5" y="112.5" width="15" height="15" fill="#FFC000" stroke="#e3e3e3" stroke-width="1"/><rect x="844.5" y="112.5" width="15" height="15" fill="#5B9BD5" stroke="#e3e3e3" stroke-width="1"/><rect x="864.5" y="112.5" width="15" height="15" fill="#70AD47" stroke="#e3e3e3" stroke-width="1"/><rect x="684.5" y="144.5" width="15" height="79" fill="#fff" stroke="#e3e3e3" stroke-width="1"/><rect x="685" y="145.0" width="14" height="15.9" fill="#F2F2F2"/><rect x="685" y="160.6" width="14" height="15.9" fill="#D9D9D9"/><rect x="685" y="176.2" width="14" height="15.9" fill="#BFBFBF"/><rect x="685" y="191.8" width="14" height="15.9" fill="#A6A6A6"/><rect x="685" y="207.4" width="14" height="15.9" fill="#808080"/><rect x="704.5" y="144.5" width="15" height="79" fill="#fff" stroke="#e3e3e3" stroke-width="1"/><rect x="705" y="145.0" width="14" height="15.9" fill="#808080"/><rect x="705" y="160.6" width="14" height="15.9" fill="#595959"/><rect x="705" y="176.2" width="14" height="15.9" fill="#404040"/><rect x="705" y="191.8" width="14" height="15.9" fill="#262626"/><rect x="705" y="207.4" width="14" height="15.9" fill="#0D0D0D"/><rect x="724.5" y="144.5" width="15" height="79" fill="#fff" stroke="#e3e3e3" stroke-width="1"/><rect x="725" y="145.0" width="14" height="15.9" fill="#D0CECE"/><rect x="725" y="160.6" width="14" height="15.9" fill="#AEAAAA"/><rect x="725" y="176.2" width="14" height="15.9" fill="#767171"/><rect x="725" y="191.8" width="14" height="15.9" fill="#3B3838"/><rect x="725" y="207.4" width="14" height="15.9" fill="#181717"/><rect x="744.5" y="144.5" width="15" height="79" fill="#fff" stroke="#e3e3e3" stroke-width="1"/><rect x="745" y="145.0" width="14" height="15.9" fill="#D6DCE5"/><rect x="745" y="160.6" width="14" height="15.9" fill="#ADB9CA"/><rect x="745" y="176.2" width="14" height="15.9" fill="#8497B0"/><rect x="745" y="191.8" width="14" height="15.9" fill="#333F50"/><rect x="745" y="207.4" width="14" height="15.9" fill="#222A35"/><rect x="764.5" y="144.5" width="15" height="79" fill="#fff" stroke="#e3e3e3" stroke-width="1"/><rect x="765" y="145.0" width="14" height="15.9" fill="#DAE3F3"/><rect x="765" y="160.6" width="14" height="15.9" fill="#B4C7E7"/><rect x="765" y="176.2" width="14" height="15.9" fill="#8FAADC"/><rect x="765" y="191.8" width="14" height="15.9" fill="#2F5597"/><rect x="765" y="207.4" width="14" height="15.9" fill="#203864"/><rect x="784.5" y="144.5" width="15" height="79" fill="#fff" stroke="#e3e3e3" stroke-width="1"/><rect x="785" y="145.0" width="14" height="15.9" fill="#FBE5D6"/><rect x="785" y="160.6" width="14" height="15.9" fill="#F8CBAD"/><rect x="785" y="176.2" width="14" height="15.9" fill="#F4B183"/><rect x="785" y="191.8" width="14" height="15.9" fill="#C55A11"/><rect x="785" y="207.4" width="14" height="15.9" fill="#843C0C"/><rect x="804.5" y="144.5" width="15" height="79" fill="#fff" stroke="#e3e3e3" stroke-width="1"/><rect x="805" y="145.0" width="14" height="15.9" fill="#EDEDED"/><rect x="805" y="160.6" width="14" height="15.9" fill="#DBDBDB"/><rect x="805" y="176.2" width="14" height="15.9" fill="#C9C9C9"/><rect x="805" y="191.8" width="14" height="15.9" fill="#7B7B7B"/><rect x="805" y="207.4" width="14" height="15.9" fill="#525252"/><rect x="824.5" y="144.5" width="15" height="79" fill="#fff" stroke="#e3e3e3" stroke-width="1"/><rect x="825" y="145.0" width="14" height="15.9" fill="#FFF2CC"/><rect x="825" y="160.6" width="14" height="15.9" fill="#FFE699"/><rect x="825" y="176.2" width="14" height="15.9" fill="#FFD966"/><rect x="825" y="191.8" width="14" height="15.9" fill="#BF9000"/><rect x="825" y="207.4" width="14" height="15.9" fill="#7F6000"/><rect x="844.5" y="144.5" width="15" height="79" fill="#fff" stroke="#e3e3e3" stroke-width="1"/><rect x="845" y="145.0" width="14" height="15.9" fill="#DEEBF7"/><rect x="845" y="160.6" width="14" height="15.9" fill="#BDD7EE"/><rect x="845" y="176.2" width="14" height="15.9" fill="#9DC3E6"/><rect x="845" y="191.8" width="14" height="15.9" fill="#2E75B6"/><rect x="845" y="207.4" width="14" height="15.9" fill="#1F4E79"/><rect x="864.5" y="144.5" width="15" height="79" fill="#fff" stroke="#e3e3e3" stroke-width="1"/><rect x="865" y="145.0" width="14" height="15.9" fill="#E2F0D9"/><rect x="865" y="160.6" width="14" height="15.9" fill="#C5E0B4"/><rect x="865" y="176.2" width="14" height="15.9" fill="#A9D18E"/><rect x="865" y="191.8" width="14" height="15.9" fill="#548235"/><rect x="865" y="207.4" width="14" height="15.9" fill="#385723"/><line x1="682" y1="239.5" x2="882" y2="239.5" stroke="#e1dfdd" stroke-width="1"/><text x="698.4" y="265.9" font-size="15" fill="#222" font-weight="700" text-anchor="start" textLength="110.5" lengthAdjust="spacingAndGlyphs" >Standard Colors</text><rect x="684.5" y="281.5" width="15" height="15" fill="#C00000" stroke="#e3e3e3" stroke-width="1"/><rect x="704.5" y="281.5" width="15" height="15" fill="#FF0000" stroke="#e3e3e3" stroke-width="1"/><rect x="724.5" y="281.5" width="15" height="15" fill="#FFC000" stroke="#e3e3e3" stroke-width="1"/><rect x="744.5" y="281.5" width="15" height="15" fill="#FFFF00" stroke="#e3e3e3" stroke-width="1"/><rect x="764.5" y="281.5" width="15" height="15" fill="#92D050" stroke="#e3e3e3" stroke-width="1"/><rect x="784.5" y="281.5" width="15" height="15" fill="#00B050" stroke="#e3e3e3" stroke-width="1"/><rect x="804.5" y="281.5" width="15" height="15" fill="#fde9a8" stroke="#f29436" stroke-width="1.2"/><rect x="806" y="283" width="12" height="12" fill="#00B0F0"/><rect x="824.5" y="281.5" width="15" height="15" fill="#0070C0" stroke="#e3e3e3" stroke-width="1"/><rect x="844.5" y="281.5" width="15" height="15" fill="#002060" stroke="#e3e3e3" stroke-width="1"/><rect x="864.5" y="281.5" width="15" height="15" fill="#7030A0" stroke="#e3e3e3" stroke-width="1"/><line x1="682" y1="310.5" x2="882" y2="310.5" stroke="#e1dfdd" stroke-width="1"/><rect x="696.5" y="319.5" width="19" height="19" fill="#fff" stroke="#d6d6d6" stroke-width="1"/><text x="726.2" y="335.4" font-size="15" fill="#8a8886" font-weight="400" text-anchor="start" textLength="41.8" lengthAdjust="spacingAndGlyphs" stroke="#8a8886" stroke-width="0.12" >No Fill</text><rect x="726.2" y="337.6" width="11" height="1" fill="#8a8886"/><line x1="682" y1="347.5" x2="882" y2="347.5" stroke="#e1dfdd" stroke-width="1"/><path d="M706 356 C700 356 696.5 360 696.5 364 C696.5 367 699.5 366.5 701.5 367.5 C703 368.5 701 371 702 373 C703 375 706 374.5 708.5 373.5 C713 371.5 715.5 367.5 715.5 364 C715.5 359 711.5 356 706 356 Z" fill="#fff" stroke="#444" stroke-width="1.2"/><circle cx="701.3" cy="361.2" r="1.25" fill="#1e8bcd"/><circle cx="705.5" cy="359.2" r="1.25" fill="#2a9a46"/><circle cx="709.7" cy="360.5" r="1.25" fill="#ed7d31"/><circle cx="710.7" cy="364.3" r="1.25" fill="#e8403a"/><circle cx="709.5" cy="368.5" r="1.25" fill="#9b4fc4"/><text x="727.3" y="371.7" font-size="15" fill="#222" font-weight="400" text-anchor="start" textLength="112.2" lengthAdjust="spacingAndGlyphs" stroke="#222" stroke-width="0.12" >More Fill Colors...</text><rect x="727.3" y="373.9" width="12.8" height="1" fill="#222"/><path d="M696.8 410.5 L698.5 406 L708.5 396 L711.5 399 L701.5 409 Z" fill="#fff" stroke="#444" stroke-width="1.2" stroke-linejoin="round"/><path d="M706 394 L713.5 401.5 M709.5 398 L713.5 394 C714.5 393 715.5 392.8 716 393.5 C716.5 394.3 716.2 395 715.5 395.8 L711.5 399.8" fill="none" stroke="#444" stroke-width="1.3"/><path d="M697 410.5 L699 408.5" stroke="#444" stroke-width="2"/><text x="727.3" y="408.0" font-size="15" fill="#222" font-weight="400" text-anchor="start" textLength="76.6" lengthAdjust="spacingAndGlyphs" stroke="#222" stroke-width="0.12" >Eyedropper</text><rect x="727.3" y="410.2" width="9" height="1" fill="#222"/><rect x="807.5" y="315.5" width="77" height="31" fill="#fff" stroke="#c4c4c4" stroke-width="1" filter="url(#msh)"/><text x="813.4" y="336.7" font-size="14.7" fill="#575757" font-weight="400" text-anchor="start" textLength="64.7" lengthAdjust="spacingAndGlyphs" stroke="#575757" stroke-width="0.12" >Light Blue</text><path d="M807.5 293.5 V309.5 L811.3 305.8 L814.3 312 L816.8 311 L813.9 304.6 L819 304.6 Z" fill="#fff" stroke="#000" stroke-width="1" stroke-linejoin="round"/>
</svg>
</body></html>
